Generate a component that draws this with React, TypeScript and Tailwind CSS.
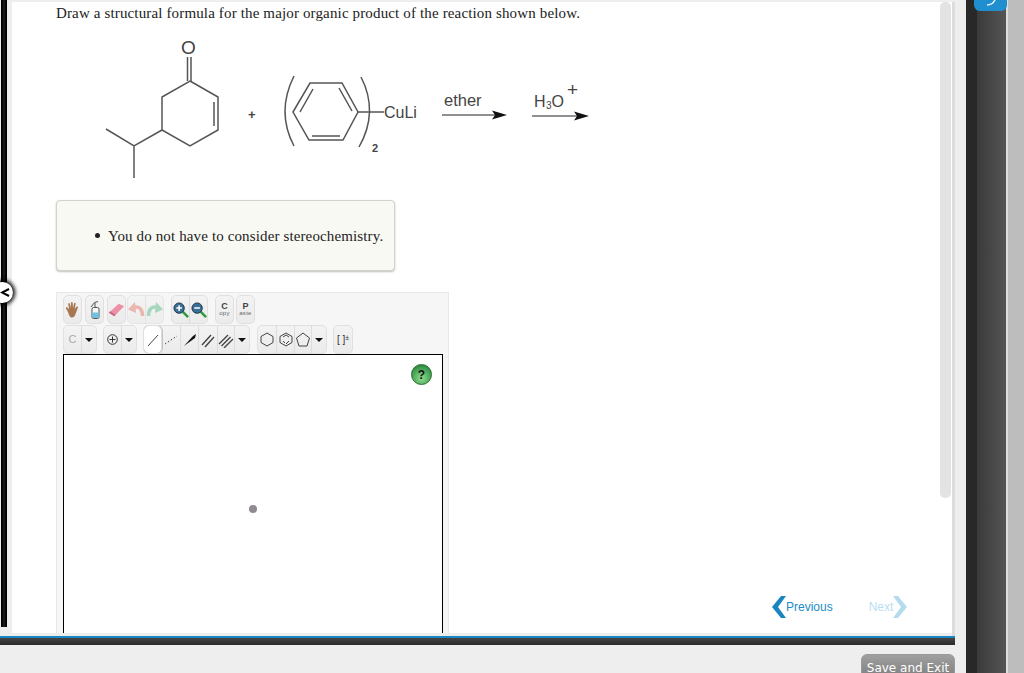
import React from "react";

// one cell of a toolbar group
function Cell({ w, active, children }: { w: number; active?: boolean; children?: React.ReactNode }) {
  return (
    <div
      style={{ width: w }}
      className={`flex h-full shrink-0 items-center justify-center border-r border-[#dcdcdc] last:border-r-0 ${
        active ? "rounded-[5px] bg-white outline outline-[#c4c4c4]" : ""
      }`}
    >
      {children}
    </div>
  );
}

function Group({ children }: { children: React.ReactNode }) {
  return (
    <div className="flex h-full shrink-0 overflow-hidden rounded-[5px] border border-[#e0e0e0] bg-gradient-to-b from-[#f3f3f3] to-[#ebebeb]">
      {children}
    </div>
  );
}

const Caret = () => (
  <svg width="8" height="4" viewBox="0 0 8 4">
    <path d="M0 0h8L4 4z" fill="#111" />
  </svg>
);

const Hand = () => (
  <svg width="15" height="17" viewBox="0 0 15 17">
    <path
      d="M3 11 1 7.500c-.6-1 .7-1.800 1.400-.9L4 8.500 3.300 3c-.1-1.200 1.400-1.300 1.600-.2L6 7V1.800c0-1.200 1.600-1.200 1.700 0L8 7l1-4.500c.3-1.100 1.800-.8 1.600.3L9.800 8l1.700-2.200c.8-.9 2 0 1.400 1L10.500 13c-.7 2-1.500 3.500-3.500 3.500-2.200 0-3-2.500-4-5.500z"
      fill="#a87650"
    />
  </svg>
);

const Flask = () => (
  <svg width="12" height="20" viewBox="0 0 12 20">
    <path d="M2 7 5.500 2.500 9 1.500M6 3v4" fill="none" stroke="#555" strokeWidth="1" />
    <rect x="3" y="7.500" width="7" height="11" rx="1.500" fill="#f4fbfd" stroke="#555" />
    <rect x="3.500" y="12.500" width="6" height="5.500" fill="#6ac3e4" />
  </svg>
);

const Eraser = () => (
  <svg width="19" height="17" viewBox="0 0 19 17">
    <path d="M1 12 12 2l6 3L7 16z" fill="#ee8fa8" />
    <path d="M1 12l6 4 1.500-1.500-6-4z" fill="#c96a85" />
  </svg>
);

const Curl = ({ color, flip }: { color: string; flip?: boolean }) => (
  <svg width="17" height="15" viewBox="0 0 17 15" className={flip ? "-scale-x-100" : ""}>
    <path d="M14.500 14C14.500 7 11 4 6 5.500" fill="none" stroke={color} strokeWidth="3.500" />
    <path d="M7 0 0 7.500 8 11z" fill={color} />
  </svg>
);

const Lens = ({ plus }: { plus?: boolean }) => (
  <svg width="16" height="16" viewBox="0 0 17 17">
    <path d="M10 10l6 6" stroke="#2f9a3a" strokeWidth="2.600" />
    <circle cx="6.500" cy="6.500" r="5.500" fill="#3a6f96" stroke="#17324a" />
    <path d={plus ? "M3.500 6.500h6M6.500 3.500v6" : "M3.500 6.500h6"} stroke="#fff" strokeWidth="1.600" />
  </svg>
);

const Bond = ({ d, width = 1, dash }: { d: string; width?: number; dash?: string }) => (
  <svg width="16" height="16" viewBox="0 0 16 16">
    <path d={d} fill="none" stroke="#444" strokeWidth={width} strokeDasharray={dash} />
  </svg>
);

const Ring = ({ points, inner }: { points: string; inner?: boolean }) => (
  <svg width="14" height="15" viewBox="0 0 14 15">
    <polygon points={points} fill="none" stroke="#444" strokeWidth="1" />
    {inner && <path d="M4 5l3-2 3 2M10 9l-3 3M4 9l2 2" fill="none" stroke="#444" strokeWidth="1" />}
  </svg>
);

function Toolbar() {
  return (
    <div>
      <div className="flex h-[29px] items-center">
        <div className="h-full"><Group><Cell w={17}><Hand /></Cell></Group></div>
        <div className="ml-[3px] h-full"><Group><Cell w={17}><Flask /></Cell></Group></div>
        <div className="ml-[3px] h-full"><Group><Cell w={17}><Eraser /></Cell></Group></div>
        <div className="ml-[1px] h-full opacity-70">
          <Group>
            <Cell w={18}><Curl color="#e59c90" /></Cell>
            <Cell w={17}><Curl color="#86c9a6" flip /></Cell>
          </Group>
        </div>
        <div className="ml-[7px] h-full">
          <Group>
            <Cell w={18}><Lens plus /></Cell>
            <Cell w={17}><Lens /></Cell>
          </Group>
        </div>
        <div className="ml-[7px] h-full">
          <Group>
            <Cell w={17}>
              <div className="text-center leading-[7px] text-[#444]">
                <div className="text-[9px] font-bold">C</div>
                <div className="text-[6px] tracking-[0.3px] text-[#666]">opy</div>
              </div>
            </Cell>
          </Group>
        </div>
        <div className="ml-[2px] h-full">
          <Group>
            <Cell w={17}>
              <div className="text-center leading-[7px] text-[#444]">
                <div className="text-[9px] font-bold">P</div>
                <div className="text-[6px] tracking-[0.3px] text-[#666]">aste</div>
              </div>
            </Cell>
          </Group>
        </div>
      </div>
      <div className="mt-[1px] flex h-[29px] items-center">
        <Group>
          <Cell w={18}><span className="text-[11px] text-[#aaa]">C</span></Cell>
          <Cell w={14}><Caret /></Cell>
        </Group>
        <div className="ml-[6px] h-full">
          <Group>
            <Cell w={18}>
              <svg width="11" height="11" viewBox="0 0 11 11">
                <circle cx="5.500" cy="5.500" r="4.800" fill="none" stroke="#333" />
                <path d="M2.500 5.500h6M5.500 2.500v6" stroke="#333" />
              </svg>
            </Cell>
            <Cell w={14}><Caret /></Cell>
          </Group>
        </div>
        <div className="ml-[6px] h-full">
          <Group>
            <Cell w={18} active><Bond d="M3 14 13 3" /></Cell>
            <Cell w={19}><Bond d="M2 12 14 4" dash="1.500 2" /></Cell>
            <Cell w={18}>
              <svg width="16" height="16" viewBox="0 0 16 16"><path d="M2 14 11 4l3-2-1 4z" fill="#111" /></svg>
            </Cell>
            <Cell w={19}><Bond d="M2 13 11 3M5 15 14 5" width={1.400} /></Cell>
            <Cell w={17}><Bond d="M1 12 10 3M3.500 14 12.500 5M6 16 15 7" width={1.400} /></Cell>
            <Cell w={14}><Caret /></Cell>
          </Group>
        </div>
        <div className="ml-[7px] h-full">
          <Group>
            <Cell w={19}><Ring points="7,1 13,4.500 13,10.500 7,14 1,10.500 1,4.500" /></Cell>
            <Cell w={18}><Ring points="7,1 13,4.500 13,10.500 7,14 1,10.500 1,4.500" inner /></Cell>
            <Cell w={17}><Ring points="7,1 13.500,6 11,14 3,14 .5,6" /></Cell>
            <Cell w={14}><Caret /></Cell>
          </Group>
        </div>
        <div className="ml-[6px] h-full">
          <Group>
            <Cell w={18}><span className="text-[10px] text-[#333]">[ ]<sup className="text-[7px]">±</sup></span></Cell>
          </Group>
        </div>
      </div>
    </div>
  );
}

// the reaction scheme: page coordinates minus the svg's own offset (x 100, y 35)
function Scheme() {
  return (
    <svg width="500" height="150" viewBox="100 35 500 150" className="block">
      <g fill="none" stroke="#555" strokeWidth="1.500">
        <path d="M187.500 57v24M191 57v24" />
        <path d="M190 81 218 97V130L190 146 162 130V97Z" />
        <path d="M214 102v24" />
        <path d="M162 130 134 146 106 129M134 146v32" />
        <path d="M294 76Q276 112 294 146" />
        <path d="M293 112 310 83H342L358 112 343 140H309Z" />
        <path d="M300 112 313 89M339 88 352 111M312 136H340" />
        <path d="M358 112H384" />
        <path d="M361 77Q379 112 359 147" />
      </g>
      <g fontFamily="'Liberation Sans', Arial, sans-serif" fill="#444">
        <text x="181" y="54" fontSize="19">O</text>
        <text x="248" y="119" fontSize="13" fontWeight="700">+</text>
        <text x="372" y="152" fontSize="11" fontWeight="700">2</text>
        <text x="384" y="118" fontSize="16">CuLi</text>
        <text x="444" y="106" fontSize="16.500">ether</text>
        <text x="534" y="107" fontSize="16">H</text>
        <text x="546" y="109" fontSize="10">3</text>
        <text x="551.500" y="107" fontSize="16">O</text>
        <text x="567" y="96" fontSize="19">+</text>
      </g>
      <path d="M442 115H495" stroke="#222" strokeWidth="1.200" />
      <path d="M492 110.500 507 115 492 119.500 495 115Z" fill="#111" />
      <path d="M532 116H578" stroke="#222" strokeWidth="1.200" />
      <path d="M574 111.500 589 116 574 120.500 577 116Z" fill="#111" />
    </svg>
  );
}

export default function App() {
  return (
    <div className="relative flex h-[673px] w-[1024px] overflow-hidden bg-[#eeeeee] font-['Liberation_Sans',Arial,sans-serif]">
      {/* MAIN */}
      <div className="flex w-[966px] shrink-0 flex-col">
        <div className="flex h-[636px] shrink-0">
          <div className="h-[627px] w-[12px] shrink-0 pl-[1px]">
            <div className="h-full w-[6px] bg-gradient-to-r from-[#000] via-[#222] to-[#000]" />
          </div>

          {/* CONTENT */}
          <div className="relative mt-[2px] h-[631px] w-[940px] shrink-0 overflow-hidden bg-white pl-[44px]">
            <p className="pt-[3px] font-['Liberation_Serif',serif] text-[15px] leading-[17px] tracking-[0.145px] text-[#222]">
              Draw a structural formula for the major organic product of the reaction shown below.
            </p>
            <div className="ml-[44px] mt-[13px]">
              <Scheme />
            </div>

            <div className="mt-[15px] flex h-[71px] w-[339px] items-center rounded-[4px] border border-[#d3d3cc] bg-[#f9f9f4] pl-[38px] shadow-[0_1px_2px_rgba(0,0,0,0.25)]">
              <span className="mr-[8px] h-[5px] w-[5px] rounded-full bg-[#222]" />
              <span className="pt-[2px] font-['Liberation_Serif',serif] text-[15px] tracking-[0.13px] text-[#222]">
                You do not have to consider stereochemistry.
              </span>
            </div>

            {/* EDITOR */}
            <div className="mt-[21px] h-[360px] w-[393px] border border-[#e8e8e8] bg-[#f6f6f6] pl-[6px] pt-[2px]">
              <Toolbar />
              <div className="relative h-[300px] w-[380px] border border-black bg-white">
                <div className="absolute left-[347px] top-[9px] flex h-[21px] w-[21px] items-center justify-center rounded-full border border-[#1d6b2a] bg-[radial-gradient(circle_at_50%_70%,#8fdc8f,#14782a)] text-[12px] font-bold text-[#111]">
                  ?
                </div>
                <div className="absolute left-[185px] top-[150px] h-[8px] w-[8px] rounded-full bg-[#8f8a94]" />
              </div>
            </div>

            {/* PREV / NEXT */}
            <div className="absolute left-[760px] top-[594px] flex items-center text-[12px]">
              <svg width="14" height="22" viewBox="0 0 14 22">
                <path d="M14 0H9L0 11l9 11h5L6 11z" fill="#1a86bf" />
              </svg>
              <span className="text-[#1a8cc8]">Previous</span>
              <span className="ml-[36px] text-[#b9dff0]">Next</span>
              <svg width="14" height="22" viewBox="0 0 14 22">
                <path d="M0 0h5l9 11-9 11H0l8-11z" fill="#b5dcee" />
              </svg>
            </div>

            {/* SCROLLBAR */}
            <div className="absolute right-[1px] top-0 h-[496px] w-[11px] rounded-[5px] bg-[#e3e3e3]" />
          </div>
          <div className="mt-[2px] h-[634px] w-[3px] shrink-0 bg-[#dcdcdc]" />
        </div>

        <div className="h-[2px] w-[955px] shrink-0 bg-[#1a86c4]" />
        <div className="h-[7px] w-[955px] shrink-0 bg-gradient-to-b from-[#444] to-[#2b2b2b]" />
        <div className="flex w-[955px] flex-1 justify-end pt-[9px]">
          <div className="h-[30px] w-[94px] rounded-t-[6px] border border-[#999] bg-gradient-to-b from-[#a0a0a0] to-[#777] pt-[1px] text-center font-['DejaVu_Sans',sans-serif] text-[12px] leading-[24px] text-white">
            Save and Exit
          </div>
        </div>
      </div>

      {/* RIGHT RAIL */}
      <div className="flex w-[42px] shrink-0 border-r-2 border-[#ddd]">
        <div className="w-[11px] bg-[#282828]" />
        <div className="flex-1 bg-gradient-to-r from-[#3a3a3a] to-[#555]" />
      </div>
      <div className="flex-1 bg-[#bdbdbd]" />

      {/* OVERLAYS */}
      <div className="absolute left-[974px] top-0 flex h-[11px] w-[33px] items-start justify-center rounded-b-[6px] bg-[#1f8fd0]">
        <svg width="10" height="6" viewBox="0 0 10 6">
          <path d="M1 5c3 0 6-1 8-5" fill="none" stroke="#e6f3fa" strokeWidth="1.500" />
        </svg>
      </div>
      <div className="absolute left-[-8px] top-[282px] flex h-[21px] w-[21px] items-center justify-end rounded-full bg-white pr-[3px] shadow-[0_0_4px_2px_#000]">
        <svg width="10" height="9" viewBox="0 0 10 9">
          <path d="M9 1 2 4.500 9 8" fill="none" stroke="#000" strokeWidth="2" />
        </svg>
      </div>
    </div>
  );
}
